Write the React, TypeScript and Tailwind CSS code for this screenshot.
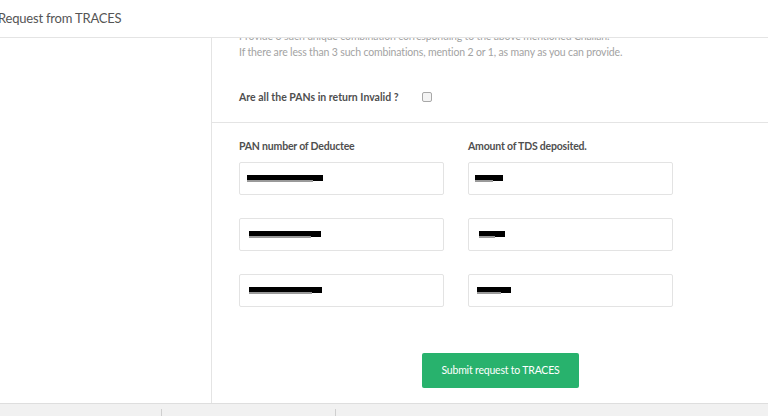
const Field = ({ bar, offset }: { bar: number; offset: number }) => (
  <div className="h-[33px] rounded-[2px] border border-[#e3e3e3] bg-white flex items-center">
    <div className="relative h-[8px]" style={{ marginLeft: offset }}>
      <div className="h-[6px] bg-black" style={{ width: bar }} />
      <div className="absolute left-0 top-[5px] h-[2px] bg-[#9a9a9a]" style={{ width: bar - 10 }} />
    </div>
  </div>
);

const rows = [
  { pan: 76, panOff: 7, amt: 28, amtOff: 6 },
  { pan: 72, panOff: 9, amt: 26, amtOff: 10 },
  { pan: 73, panOff: 9, amt: 34, amtOff: 8 },
];

const App = () => {
  return (
    <div className="w-[768px] h-[416px] overflow-hidden bg-white flex flex-col font-['Lato',sans-serif]">
      <header className="relative z-10 h-[38px] shrink-0 bg-white border-b border-[#e4e4e4] flex items-center">
        <h1 className="-ml-[2px] text-[13px] tracking-[-0.2px] text-[#555]">Request from TRACES</h1>
      </header>

      <div className="flex flex-1 min-h-0">
        <div className="w-[211px] shrink-0" />
        <section className="flex-1 border-l border-[#e4e4e4] overflow-hidden">
          <div className="-mt-[10px] px-[27px] pb-[17px] text-[10.5px] tracking-[-0.15px] leading-[16px] text-[#a3a3a3]">
            <p>Provide 3 such unique combination corresponding to the above mentioned Challan.</p>
            <p>If there are less than 3 such combinations, mention 2 or 1, as many as you can provide.</p>
            <div className="mt-[29px] flex items-center">
              <span className="font-bold tracking-[0px] text-[#4f4f4f]">Are all the PANs in return Invalid ?</span>
              <span className="ml-[23px] w-[10px] h-[10px] rounded-[2px] border border-[#a8a8a8] bg-[#f4f4f4]" />
            </div>
          </div>

          <div className="border-t border-[#e4e4e4] px-[27px] pt-[15px] pb-[15px]">
            <div className="grid grid-cols-[205px_205px] gap-x-[24px] gap-y-[23px] text-[10.5px] tracking-[-0.2px]">
              <div className="-mb-[15px] leading-[16px] font-bold text-[#4f4f4f]">PAN number of Deductee</div>
              <div className="-mb-[15px] leading-[16px] font-bold text-[#4f4f4f]">Amount of TDS deposited.</div>
              {rows.map((r, i) => (
                <div key={i} className="contents">
                  <Field bar={r.pan} offset={r.panOff} />
                  <Field bar={r.amt} offset={r.amtOff} />
                </div>
              ))}
            </div>
            <button className="mt-[46px] ml-[183px] w-[157px] h-[35px] rounded-[2px] bg-[#28b26d] text-[10.5px] tracking-[-0.2px] text-white">
              Submit request to TRACES
            </button>
          </div>
        </section>
      </div>

      <footer className="h-[13px] shrink-0 bg-[#f1f1f1] border-t border-[#dedede] flex">
        <div className="w-[161px] shrink-0" />
        <div className="mt-[5px] w-[174px] shrink-0 border-l border-[#cfcfcf]" />
        <div className="mt-[5px] flex-1 border-l border-[#cfcfcf]" />
      </footer>
    </div>
  );
};

export default App;
